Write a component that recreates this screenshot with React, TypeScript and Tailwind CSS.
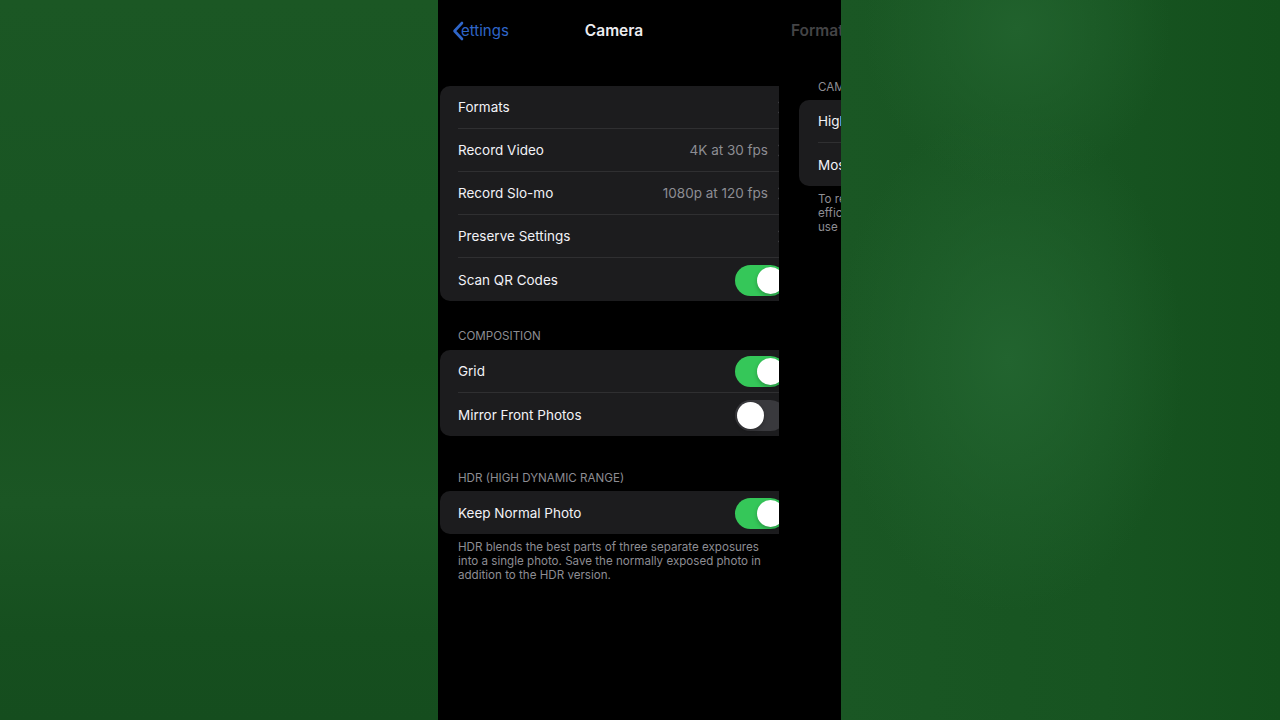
import React from 'react';

type RowProps = {
  label: string;
  value?: string;
  chevron?: boolean;
  toggle?: boolean;
  on?: boolean;
  last?: boolean;
};

const Chevron = () => (
  <svg width="8" height="13" viewBox="0 0 8 13" className="flex-none">
    <path d="M1.5 1.5l5 5-5 5" stroke="#5a5a5f" strokeWidth="2" fill="none" strokeLinecap="round" strokeLinejoin="round" />
  </svg>
);

const Toggle = ({ on }: { on: boolean }) => (
  <div
    className={`flex-none w-[51px] h-[31px] rounded-full p-[2px] flex ${
      on ? 'bg-[#35c759] justify-end' : 'bg-[#39393d] justify-start'
    }`}
  >
    <div className="w-[27px] h-[27px] rounded-full bg-white shadow-[0_2px_4px_rgba(0,0,0,0.25)]" />
  </div>
);

const Row = ({ label, value, chevron, toggle, on, last }: RowProps) => (
  <div className="h-[43px] flex pl-[18px]">
    <div
      className={`flex-1 flex items-center pt-[1px] pr-[16px] ${last ? '' : 'border-b border-[#2f2f31]'}`}
    >
      <span className="flex-1 text-[13.5px] text-[#f2f2f7] whitespace-nowrap">{label}</span>
      {value && <span className="text-[13.5px] text-[#8d8d93] whitespace-nowrap mr-[10px]">{value}</span>}
      {chevron && <Chevron />}
      {toggle && <Toggle on={!!on} />}
    </div>
  </div>
);

const Header = ({ children }: { children: React.ReactNode }) => (
  <div className="pl-[18px] text-[11.6px] leading-[14px] text-[#8d8d93] whitespace-nowrap">{children}</div>
);

const CameraPage = () => (
  <div className="w-[341px] flex-none overflow-hidden flex flex-col">
    <div className="h-[60px] flex items-center pt-[2px] pl-[14px] whitespace-nowrap">
      <div className="flex items-center">
        <svg width="12" height="20" viewBox="0 0 12 20" className="flex-none">
          <path d="M10 2L2.5 10 10 18" stroke="#2f66c9" strokeWidth="2.6" fill="none" strokeLinecap="round" strokeLinejoin="round" />
        </svg>
        <span className="text-[15px] text-[#2f66c9] -ml-[3px]">ettings</span>
      </div>
      <span className="ml-[76px] text-[15.5px] font-semibold text-[#ececf0]">Camera</span>
    </div>
    <div className="pl-[2px] pt-[26px] flex flex-col">
      <div className="w-[362px] bg-[#1c1c1e] rounded-[10px]">
        <Row label="Formats" chevron />
        <Row label="Record Video" value="4K at 30 fps" chevron />
        <Row label="Record Slo-mo" value="1080p at 120 fps" chevron />
        <Row label="Preserve Settings" chevron />
        <Row label="Scan QR Codes" toggle on last />
      </div>
      <div className="mt-[28px] mb-[7px]">
        <Header>COMPOSITION</Header>
      </div>
      <div className="w-[362px] bg-[#1c1c1e] rounded-[10px]">
        <Row label="Grid" toggle on />
        <Row label="Mirror Front Photos" toggle on={false} last />
      </div>
      <div className="mt-[35px] mb-[6px]">
        <Header>HDR (HIGH DYNAMIC RANGE)</Header>
      </div>
      <div className="w-[362px] bg-[#1c1c1e] rounded-[10px]">
        <Row label="Keep Normal Photo" toggle on last />
      </div>
      <div className="mt-[6px] pl-[18px] text-[11.6px] leading-[14px] text-[#8d8d93] whitespace-nowrap">
        <div>HDR blends the best parts of three separate exposures</div>
        <div>into a single photo. Save the normally exposed photo in</div>
        <div>addition to the HDR version.</div>
      </div>
    </div>
  </div>
);

const FormatsPage = () => (
  <div className="flex-1 min-w-0 overflow-hidden flex flex-col">
    <div className="h-[60px] flex items-center pt-[2px] pl-[12px] whitespace-nowrap">
      <span className="text-[15.5px] font-semibold text-[#444446]">Formats</span>
    </div>
    <div className="pl-[20px] pt-[20px] flex flex-col">
      <div className="mb-[6px] pl-[1px]">
        <Header>CAMERA CAPTURE</Header>
      </div>
      <div className="w-[362px] bg-[#1c1c1e] rounded-[10px] pl-[1px]">
        <Row label="High Efficiency" />
        <Row label="Most Compatible" last />
      </div>
      <div className="mt-[6px] pl-[19px] text-[11.6px] leading-[14px] text-[#8d8d93] whitespace-nowrap">
        <div>To reduce file size, capture photos and videos in the high</div>
        <div>efficiency HEIF/HEVC format. Most Compatible will always</div>
        <div>use JPEG/H.264.</div>
      </div>
    </div>
  </div>
);

export default function App() {
  return (
    <div className="w-[1280px] h-[720px] flex overflow-hidden font-['Inter','Noto_Sans',sans-serif]">
      <div className="w-[438px] flex-none bg-[linear-gradient(180deg,#1b5724_0%,#195523_30%,#18521f_50%,#1b5624_70%,#164f1f_88%,#154d1e_100%)]" />
      <div className="w-[403px] flex-none bg-black flex overflow-hidden">
        <CameraPage />
        <FormatsPage />
      </div>
      <div className="flex-1 bg-[radial-gradient(ellipse_35%_22%_at_40%_4%,#21622d_0%,rgba(30,94,42,0)_100%),radial-gradient(ellipse_40%_35%_at_38%_50%,#22642f_0%,rgba(30,94,42,0)_100%),linear-gradient(90deg,#1a5724_0%,#175421_60%,#134f1c_100%)]" />
    </div>
  );
}
